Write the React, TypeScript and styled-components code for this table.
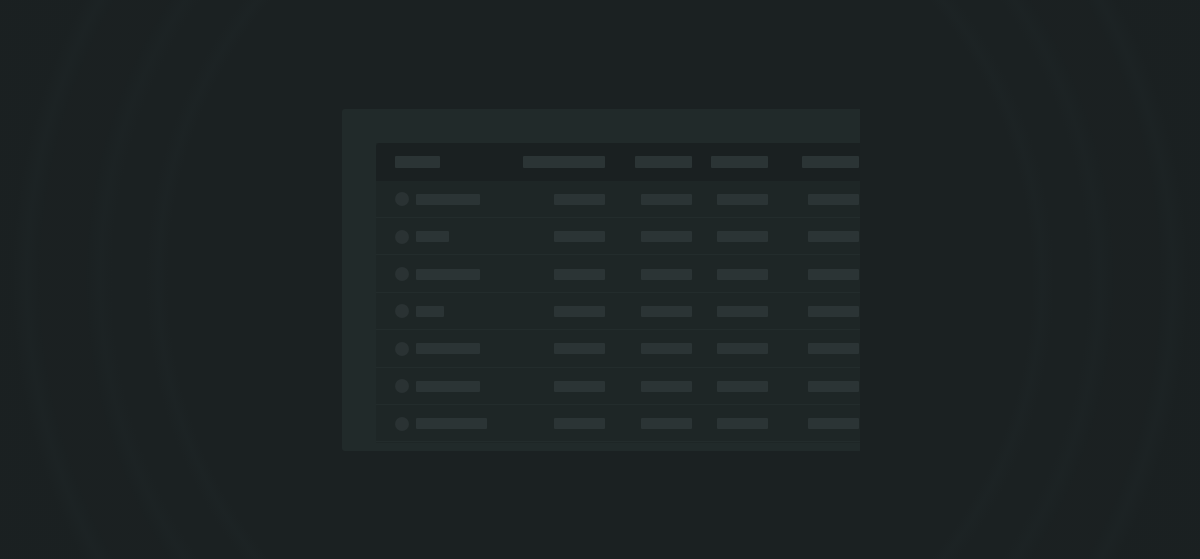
import React from "react";
import styled, { createGlobalStyle } from "styled-components";

const Global = createGlobalStyle`
  html, body { margin: 0; padding: 0; background: #1b2122; }
  body { font-family: "Liberation Sans", Arial, sans-serif; }
`;

const Stage = styled.div`
  width: 1200px;
  height: 559px;
  box-sizing: border-box;
  padding-left: 2px;
  display: flex;
  align-items: center;
  justify-content: center;
  background-color: #1b2122;
  background-image: radial-gradient(
    circle at 600px 280px,
    rgba(0, 0, 0, 0) 0px,
    rgba(0, 0, 0, 0) 432px,
    rgba(34, 44, 46, 0.16) 442px,
    rgba(0, 0, 0, 0) 454px,
    rgba(0, 0, 0, 0) 488px,
    rgba(34, 44, 46, 0.14) 500px,
    rgba(0, 0, 0, 0.015) 514px,
    rgba(0, 0, 0, 0.015) 560px,
    rgba(34, 44, 46, 0.14) 573px,
    rgba(0, 0, 0, 0.025) 588px
  );
`;

const Card = styled.div`
  width: 518px;
  height: 342px;
  box-sizing: border-box;
  padding: 34px 0 8px 34px;
  background: #212a2a;
  border-radius: 3px 0 0 3px;
  overflow: hidden;
  display: flex;
  flex-direction: column;
`;

const Table = styled.div`
  display: flex;
  flex-direction: column;
  background: #1e2626;
  flex: 1;
`;

const cols = "19px 128px 82px 87px 76px 91px";

const HeaderRow = styled.div`
  display: grid;
  grid-template-columns: ${cols};
  align-items: center;
  height: 38px;
  background: #1a2021;
  border-radius: 4px 0 0 0;
`;

const Row = styled.div`
  display: grid;
  grid-template-columns: ${cols};
  align-items: center;
  height: 37.43px;
  box-sizing: border-box;
  padding-top: 1px;
  border-bottom: 1px solid #232c2c;
`;

const Cell = styled.div<{ $right?: boolean }>`
  display: flex;
  align-items: center;
  gap: 7px;
  justify-content: ${(p) => (p.$right ? "flex-end" : "flex-start")};
`;

const Bar = styled.div<{ $w: number; $h?: number }>`
  width: ${(p) => p.$w}px;
  height: ${(p) => p.$h ?? 11}px;
  background: #2b3435;
  border-radius: 1px;
`;

const Dot = styled.div`
  width: 14px;
  height: 14px;
  border-radius: 50%;
  background: #2a3233;
  flex: none;
`;

const nameWidths = [64, 33, 64, 28, 64, 64, 71];

export default function App() {
  return (
    <>
      <Global />
      <Stage>
        <Card>
          <Table>
            <HeaderRow>
              <span />
              <Cell>
                <Bar $w={45} $h={12} />
              </Cell>
              <Cell $right>
                <Bar $w={82} $h={12} />
              </Cell>
              <Cell $right>
                <Bar $w={57} $h={12} />
              </Cell>
              <Cell $right>
                <Bar $w={57} $h={12} />
              </Cell>
              <Cell $right>
                <Bar $w={57} $h={12} />
              </Cell>
            </HeaderRow>
            {nameWidths.map((w, i) => (
              <Row key={i}>
                <span />
                <Cell>
                  <Dot />
                  <Bar $w={w} />
                </Cell>
                <Cell $right>
                  <Bar $w={51} />
                </Cell>
                <Cell $right>
                  <Bar $w={51} />
                </Cell>
                <Cell $right>
                  <Bar $w={51} />
                </Cell>
                <Cell $right>
                  <Bar $w={51} />
                </Cell>
              </Row>
            ))}
          </Table>
        </Card>
      </Stage>
    </>
  );
}
